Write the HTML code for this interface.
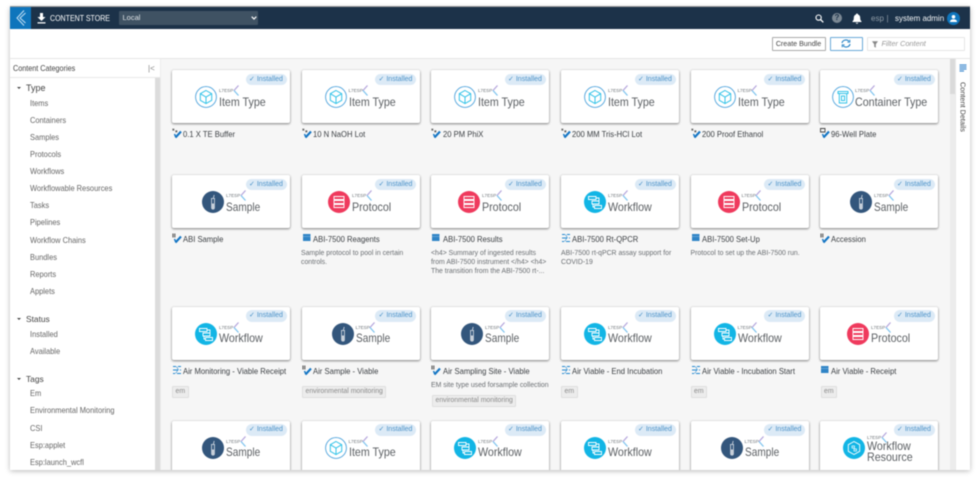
<!DOCTYPE html>
<html><head><meta charset="utf-8"><style>
*{box-sizing:border-box}
html,body{margin:0;padding:0;width:980px;height:482px;background:#fff;overflow:hidden;font-family:"Liberation Sans","DejaVu Sans",sans-serif}
.a{position:absolute;white-space:nowrap}
.x{transform-origin:0 50%}
#root{position:absolute;left:0;top:0;width:980px;height:482px;filter:blur(.5px)}
#win{position:absolute;left:10px;top:7px;width:960px;height:463px;box-shadow:0 1px 5px rgba(0,0,0,.28);background:#fff}
#hdr{left:10px;top:7px;width:960px;height:21.5px;background:#1c3249}
#tool{left:10px;top:29px;width:960px;height:30px;background:#fff;border-bottom:1px solid #e6e6e6}
#side{left:10px;top:59px;width:150px;height:411px;background:#fff;overflow:hidden}
.s{left:20px;font-size:8.4px;color:#666;line-height:10px;transform:scaleX(.89);transform-origin:0 50%}
.h{left:6px;font-size:9px;color:#444;line-height:10px;padding-left:10px}
.h:before{content:"";position:absolute;left:1px;top:4px;border:2.2px solid transparent;border-top:2.6px solid #444;border-bottom:0}
#main{left:160px;top:59px;width:790px;height:411px;background:#f6f6f6;overflow:hidden;border-left:1px solid #ececec}
.c{position:absolute;width:118px;height:53px;background:#fff;border-radius:2px;box-shadow:0 1px 2px rgba(0,0,0,.45),0 0 2px rgba(0,0,0,.12)}
.p{position:absolute;left:73.5px;top:3.6px;width:41px;height:11.5px;border-radius:6px;background:#dceaf6;color:#4d93c9;font-size:7px;line-height:11.5px;text-align:center;white-space:nowrap}
.c svg.i{position:absolute;width:22px;height:22px;top:16px}
.t{position:absolute;top:23.5px;font-size:12px;line-height:16px;color:#5b5f63;white-space:nowrap;transform:scaleX(.89);transform-origin:0 50%}
.t.sm{transform:scaleX(.84)}
.e{position:absolute;top:17px;font-size:4.6px;line-height:7px;color:#6d7378;white-space:nowrap}
.e svg{position:absolute;left:12.5px;top:-3px;width:8px;height:13px}
.n{position:absolute;font-size:8.6px;line-height:11px;color:#3b3f43;white-space:nowrap;transform:scaleX(.89);transform-origin:0 50%;margin-top:.4px}
.m{position:absolute;width:10px;height:11px}
.d{position:absolute;font-size:6.9px;line-height:9.2px;color:#6b6f73;white-space:nowrap}
.g{position:absolute;height:11.5px;background:#ececec;border:1px solid #dfdfdf;border-radius:1px;font-size:6.9px;line-height:10px;color:#8a8a8a;padding:0 2.5px;white-space:nowrap}
</style></head><body>
<svg width="0" height="0" style="position:absolute"><defs>
<symbol id="ic-item" viewBox="0 0 22 22"><circle cx="11" cy="11" r="10.4" fill="#fff" stroke="#4ea3dc" stroke-width=".9"/><path d="M11 4.5l5.7 3.2v6.6L11 17.5l-5.7-3.2V7.7zM5.3 7.7L11 11l5.700-3.300M11 11v6.500" fill="none" stroke="#33c3e8" stroke-width="1"/></symbol>
<symbol id="ic-cont" viewBox="0 0 22 22"><circle cx="11" cy="11" r="10.4" fill="#fff" stroke="#4ea3dc" stroke-width=".9"/><path d="M6 5.500h10v2H6zM7.300 7.500h7.400v9.500H7.300zM9.500 10h3v4.500h-3z" fill="none" stroke="#33c3e8" stroke-width="1"/></symbol>
<symbol id="ic-sample" viewBox="0 0 22 22"><circle cx="11" cy="11" r="11" fill="#33567c"/><path d="M9 7.500h4M9.600 7.500v9.300a1.400 1.400 0 0 0 2.800 0V7.500M11.300 7.500l.9-3.500" fill="none" stroke="#d8dee6" stroke-width=".8"/><path d="M9.800 12.500h2.400v4.300a1.200 1.200 0 0 1-2.400 0z" fill="#c5ced8"/></symbol>
<symbol id="ic-prot" viewBox="0 0 22 22"><circle cx="11" cy="11" r="11" fill="#ef3a5d"/><path d="M6 5.500h10v3H6zM6 9.500h10v3H6zM6 13.500h10v3H6z" fill="none" stroke="#fff" stroke-width=".9"/></symbol>
<symbol id="ic-wf" viewBox="0 0 22 22"><circle cx="11" cy="11" r="11" fill="#12b5e5"/><path d="M4.500 5.500h7.500v3H4.500zM8 10h7v3H8zM10.500 14.500h7v3h-7zM12 7h3v3M9 13v3h1.500" fill="none" stroke="#fff" stroke-width=".9"/></symbol>
<symbol id="ic-res" viewBox="0 0 22 22"><circle cx="11" cy="11" r="11" fill="#12b5e5"/><path d="M11 4.500l5.700 3.200v6.600L11 17.500l-5.700-3.200V7.700z" fill="none" stroke="#fff" stroke-width=".9"/><path d="M9 9h2.500v2H9zM11 12h2.500v2H11z" fill="none" stroke="#fff" stroke-width=".7"/></symbol>
<symbol id="chev" viewBox="0 0 8 13"><path d="M6.500 1.500L2 6.500" fill="none" stroke="#b5a6dc" stroke-width="1.300"/><path d="M2 6.500l4.500 5" fill="none" stroke="#7fc4ee" stroke-width="1.300"/></symbol>
<symbol id="m-item" viewBox="0 0 10 11"><path d="M.5 .8l1.700 1.700M2.200 .8L.5 2.500M3.500 2.500l1.700 1.700M5.200 2.500L3.500 4.200" stroke="#444" stroke-width=".8" fill="none"/><path d="M2.500 6l1.500 3.500" fill="none" stroke="#1576c4" stroke-width="1.500"/><path d="M3.500 9.500L9 3.500" fill="none" stroke="#1576c4" stroke-width="2.100"/></symbol>
<symbol id="m-cont" viewBox="0 0 10 11"><path d="M.5.500h4.500v3.500H.5z" stroke="#444" stroke-width=".9" fill="none"/><path d="M2.500 6l1.500 3.500" fill="none" stroke="#1576c4" stroke-width="1.500"/><path d="M3.500 9.500L9 3.500" fill="none" stroke="#1576c4" stroke-width="2.100"/></symbol>
<symbol id="m-samp" viewBox="0 0 10 11"><path d="M1 .5v4M2.800 .5v4" stroke="#555" stroke-width="1.100" fill="none"/><path d="M2.500 6l1.500 3.500" fill="none" stroke="#1576c4" stroke-width="1.500"/><path d="M3.500 9.500L9 3.500" fill="none" stroke="#1576c4" stroke-width="2.100"/></symbol>
<symbol id="m-prot" viewBox="0 0 10 11"><rect x="1" y="1" width="7.500" height="7" fill="#2f84c6"/><path d="M1 3.500h7.500" stroke="#8fc0e4" stroke-width=".5"/></symbol>
<symbol id="m-wf" viewBox="0 0 10 11"><path d="M1 1.500h3M6 1.500h3M1 5h5M8 5h1M1 8.500h2M5 8.500h4" stroke="#1f86cf" stroke-width="1.100" fill="none"/><path d="M4.500 1.500l2 3.500M3.500 8.500l2.500-3.500" stroke="#1f86cf" stroke-width=".6" fill="none"/></symbol>
</defs></svg>
<div id="root">
<div id="win"></div>
<div class="a" style="left:10px;top:6px;width:960px;height:1px;background:#9a9a9a"></div>
<div class="a" id="hdr"></div>
<div class="a" style="left:10px;top:7px;width:21px;height:21.5px;background:#0e75bc"></div>
<svg class="a" style="left:14px;top:9px" width="13" height="18" viewBox="0 0 13 18"><path d="M10 1.500L3 9l7 7.500M11.500 4L6 9l5.500 5" fill="none" stroke="#bcdcf2" stroke-width="1.100"/></svg>
<svg class="a" style="left:37px;top:13px" width="9" height="11" viewBox="0 0 9 11"><path d="M3 0h3v4h2.500L4.500 8 .5 4H3zM.5 9.200h8v1.300h-8z" fill="#fff"/></svg>
<div class="a x" style="left:50px;top:12.500px;font-size:8.200px;line-height:11px;color:#fff;transform:scaleX(.86)">CONTENT STORE</div>
<div class="a" style="left:118.500px;top:11px;width:139.500px;height:14px;background:#3f5263;border-radius:1px;color:#dfe3e6;font-size:7.500px;line-height:14px;padding-left:4px">Local</div>
<svg class="a" style="left:250.500px;top:16px" width="6" height="4" viewBox="0 0 6 4"><path d="M.7.700L3 3 5.300.700" fill="none" stroke="#fff" stroke-width="1.200"/></svg>
<svg class="a" style="left:814.500px;top:14px" width="9" height="9" viewBox="0 0 9 9"><circle cx="3.600" cy="3.600" r="2.600" fill="none" stroke="#fff" stroke-width="1.100"/><path d="M5.500 5.500L8.300 8.300" stroke="#fff" stroke-width="1.300"/></svg>
<div class="a" style="left:832px;top:13px;width:10px;height:10px;border-radius:50%;background:#7b8894;color:#1c3249;font-size:8px;font-weight:bold;line-height:10px;text-align:center">?</div>
<svg class="a" style="left:852px;top:13px" width="10" height="11" viewBox="0 0 10 11"><path d="M5 .5c.6 0 1 .4 1 1 1.500.5 2.200 1.700 2.200 3.200 0 2 .4 2.800 1.300 3.600v.7H.5v-.7c.9-.8 1.300-1.600 1.300-3.600C1.800 3.200 2.500 2 4 1.500c0-.6.4-1 1-1zM3.800 9.700h2.400C6.100 10.400 5.600 10.800 5 10.800s-1.100-.4-1.200-1.100z" fill="#fff"/></svg>
<div class="a" style="left:871px;top:12.500px;font-size:8px;line-height:11px;color:#8f9ba6">esp</div>
<div class="a" style="left:886.500px;top:12.500px;font-size:8px;line-height:11px;color:#8f9ba6">|</div>
<div class="a x" style="left:895px;top:12.500px;font-size:8.300px;line-height:11px;color:#f2f4f6;transform:scaleX(.96)">system admin</div>
<div class="a" style="left:946.500px;top:12px;width:13px;height:13px;border-radius:50%;background:#0e75bc"></div>
<svg class="a" style="left:948.500px;top:14px" width="9" height="9" viewBox="0 0 9 9"><circle cx="4.500" cy="2.800" r="1.800" fill="#fff"/><path d="M1 8c0-2 1.600-2.800 3.500-2.800S8 6 8 8z" fill="#fff"/></svg>

<div class="a" id="tool"></div>
<div class="a" style="left:771.500px;top:36.500px;width:54px;height:14.500px;border:1px solid #aaa;border-radius:1px;background:#fff;font-size:7.100px;line-height:12.500px;color:#444;text-align:center">Create Bundle</div>
<div class="a" style="left:830px;top:36.500px;width:32.500px;height:14.500px;border:1px solid #6aa9d8;border-radius:1px;background:#fff"></div>
<svg class="a" style="left:841px;top:39px" width="10" height="9" viewBox="0 0 10 9"><path d="M1 4a4 3.500 0 0 1 7-1.800M9 5a4 3.500 0 0 1-7 1.800" fill="none" stroke="#1f7fc4" stroke-width="1.100"/><path d="M8.800.8v2.400H6.400M1.200 8.200V5.800h2.400" fill="none" stroke="#1f7fc4" stroke-width=".9"/></svg>
<div class="a" style="left:867px;top:36.500px;width:98px;height:14.500px;border:1px solid #e6e6e6;border-radius:1px;background:#fff;font-size:7.400px;line-height:12.500px;color:#999;font-style:italic;padding-left:13.500px">Filter Content</div>
<svg class="a" style="left:871.500px;top:40.500px" width="6" height="7" viewBox="0 0 6 7"><path d="M0 .3h6L3.800 3.200V6.800L2.200 5.800V3.200z" fill="#888"/></svg>

<div class="a" id="side">
<div class="a x" style="left:3px;top:4px;font-size:8.300px;line-height:11px;color:#444;transform:scaleX(.87)">Content Categories</div>
<div class="a" style="left:0;top:18px;width:150px;height:1px;background:#e8e8e8"></div>
<div class="a" style="left:138px;top:4px;font-size:8px;line-height:11px;color:#888">|&lt;</div>
<div class="a" style="left:145px;top:19px;width:4.500px;height:392px;background:#dcdcdc"></div>
<div class="a h" style="top:24px">Type</div>
<div class="a s" style="top:39px">Items</div>
<div class="a s" style="top:56px">Containers</div>
<div class="a s" style="top:73px">Samples</div>
<div class="a s" style="top:90px">Protocols</div>
<div class="a s" style="top:107px">Workflows</div>
<div class="a s" style="top:124px">Workflowable Resources</div>
<div class="a s" style="top:141px">Tasks</div>
<div class="a s" style="top:158px">Pipelines</div>
<div class="a s" style="top:176px">Workflow Chains</div>
<div class="a s" style="top:193px">Bundles</div>
<div class="a s" style="top:210px">Reports</div>
<div class="a s" style="top:227px">Applets</div>
<div class="a h" style="top:255px;font-size:8.400px">Status</div>
<div class="a s" style="top:269.500px">Installed</div>
<div class="a s" style="top:287px">Available</div>
<div class="a h" style="top:315px;font-size:8.400px">Tags</div>
<div class="a s" style="top:329px">Em</div>
<div class="a s" style="top:346px">Environmental Monitoring</div>
<div class="a s" style="top:364px">CSI</div>
<div class="a s" style="top:381px">Esp:applet</div>
<div class="a s" style="top:398px">Esp:launch_wcfl</div>
</div>

<div class="a" id="main">
<!-- row 1 -->
<div class="c" style="left:11px;top:11px"><div class="p">✓ Installed</div><svg class="i" style="left:23px"><use href="#ic-item"/></svg><div class="e" style="left:47px">L7ESP<svg><use href="#chev"/></svg></div><div class="t" style="left:47px">Item Type</div></div>
<div class="c" style="left:140.500px;top:11px"><div class="p">✓ Installed</div><svg class="i" style="left:23px"><use href="#ic-item"/></svg><div class="e" style="left:47px">L7ESP<svg><use href="#chev"/></svg></div><div class="t" style="left:47px">Item Type</div></div>
<div class="c" style="left:270px;top:11px"><div class="p">✓ Installed</div><svg class="i" style="left:23px"><use href="#ic-item"/></svg><div class="e" style="left:47px">L7ESP<svg><use href="#chev"/></svg></div><div class="t" style="left:47px">Item Type</div></div>
<div class="c" style="left:400px;top:11px"><div class="p">✓ Installed</div><svg class="i" style="left:23px"><use href="#ic-item"/></svg><div class="e" style="left:47px">L7ESP<svg><use href="#chev"/></svg></div><div class="t" style="left:47px">Item Type</div></div>
<div class="c" style="left:529.500px;top:11px"><div class="p">✓ Installed</div><svg class="i" style="left:23px"><use href="#ic-item"/></svg><div class="e" style="left:47px">L7ESP<svg><use href="#chev"/></svg></div><div class="t" style="left:47px">Item Type</div></div>
<div class="c" style="left:659px;top:11px"><div class="p">✓ Installed</div><svg class="i" style="left:12px"><use href="#ic-cont"/></svg><div class="e" style="left:35px">L7ESP<svg><use href="#chev"/></svg></div><div class="t" style="left:35px">Container Type</div></div>
<svg class="m" style="left:11px;top:69px"><use href="#m-item"/></svg><div class="n" style="left:22px;top:69.500px">0.1 X TE Buffer</div>
<svg class="m" style="left:140.500px;top:69px"><use href="#m-item"/></svg><div class="n" style="left:152px;top:69.500px">10 N NaOH Lot</div>
<svg class="m" style="left:270px;top:69px"><use href="#m-item"/></svg><div class="n" style="left:281.500px;top:69.500px">20 PM PhiX</div>
<svg class="m" style="left:400px;top:69px"><use href="#m-item"/></svg><div class="n" style="left:411px;top:69.500px">200 MM Tris-HCl Lot</div>
<svg class="m" style="left:529.500px;top:69px"><use href="#m-item"/></svg><div class="n" style="left:541px;top:69.500px">200 Proof Ethanol</div>
<svg class="m" style="left:659px;top:69px"><use href="#m-cont"/></svg><div class="n" style="left:670px;top:69.500px">96-Well Plate</div>
<!-- row 2 -->
<div class="c" style="left:11px;top:116px"><div class="p">✓ Installed</div><svg class="i" style="left:30px"><use href="#ic-sample"/></svg><div class="e" style="left:54px">L7ESP<svg><use href="#chev"/></svg></div><div class="t sm" style="left:54px">Sample</div></div>
<div class="c" style="left:140.500px;top:116px"><div class="p">✓ Installed</div><svg class="i" style="left:26.500px"><use href="#ic-prot"/></svg><div class="e" style="left:50.500px">L7ESP<svg><use href="#chev"/></svg></div><div class="t" style="left:50.500px">Protocol</div></div>
<div class="c" style="left:270px;top:116px"><div class="p">✓ Installed</div><svg class="i" style="left:27px"><use href="#ic-prot"/></svg><div class="e" style="left:51px">L7ESP<svg><use href="#chev"/></svg></div><div class="t" style="left:51px">Protocol</div></div>
<div class="c" style="left:400px;top:116px"><div class="p">✓ Installed</div><svg class="i" style="left:23px"><use href="#ic-wf"/></svg><div class="e" style="left:47px">L7ESP<svg><use href="#chev"/></svg></div><div class="t" style="left:47px">Workflow</div></div>
<div class="c" style="left:529.500px;top:116px"><div class="p">✓ Installed</div><svg class="i" style="left:27px"><use href="#ic-prot"/></svg><div class="e" style="left:51px">L7ESP<svg><use href="#chev"/></svg></div><div class="t" style="left:51px">Protocol</div></div>
<div class="c" style="left:659px;top:116px"><div class="p">✓ Installed</div><svg class="i" style="left:30px"><use href="#ic-sample"/></svg><div class="e" style="left:54px">L7ESP<svg><use href="#chev"/></svg></div><div class="t sm" style="left:54px">Sample</div></div>
<svg class="m" style="left:11px;top:174px"><use href="#m-samp"/></svg><div class="n" style="left:22px;top:174.500px">ABI Sample</div>
<svg class="m" style="left:140.500px;top:174px"><use href="#m-prot"/></svg><div class="n" style="left:152px;top:174.500px">ABI-7500 Reagents</div>
<svg class="m" style="left:270px;top:174px"><use href="#m-prot"/></svg><div class="n" style="left:281.500px;top:174.500px">ABI-7500 Results</div>
<svg class="m" style="left:400px;top:174px"><use href="#m-wf"/></svg><div class="n" style="left:411px;top:174.500px">ABI-7500 Rt-QPCR</div>
<svg class="m" style="left:529.500px;top:174px"><use href="#m-prot"/></svg><div class="n" style="left:541px;top:174.500px">ABI-7500 Set-Up</div>
<svg class="m" style="left:659px;top:174px"><use href="#m-samp"/></svg><div class="n" style="left:670px;top:174.500px">Accession</div>
<div class="d" style="left:140px;top:190px">Sample protocol to pool in certain<br>controls.</div>
<div class="d" style="left:270px;top:190px">&lt;h4&gt; Summary of ingested results<br>from ABI-7500 instrument &lt;/h4&gt; &lt;h4&gt;<br>The transition from the ABI-7500 rt-...</div>
<div class="d" style="left:400px;top:190px">ABI-7500 rt-qPCR assay support for<br>COVID-19</div>
<div class="d" style="left:529.500px;top:190px">Protocol to set up the ABI-7500 run.</div>
<!-- row 3 -->
<div class="c" style="left:11px;top:247.500px"><div class="p">✓ Installed</div><svg class="i" style="left:23px"><use href="#ic-wf"/></svg><div class="e" style="left:47px">L7ESP<svg><use href="#chev"/></svg></div><div class="t" style="left:47px">Workflow</div></div>
<div class="c" style="left:140.500px;top:247.500px"><div class="p">✓ Installed</div><svg class="i" style="left:30px"><use href="#ic-sample"/></svg><div class="e" style="left:54px">L7ESP<svg><use href="#chev"/></svg></div><div class="t sm" style="left:54px">Sample</div></div>
<div class="c" style="left:270px;top:247.500px"><div class="p">✓ Installed</div><svg class="i" style="left:30px"><use href="#ic-sample"/></svg><div class="e" style="left:54px">L7ESP<svg><use href="#chev"/></svg></div><div class="t sm" style="left:54px">Sample</div></div>
<div class="c" style="left:400px;top:247.500px"><div class="p">✓ Installed</div><svg class="i" style="left:23px"><use href="#ic-wf"/></svg><div class="e" style="left:47px">L7ESP<svg><use href="#chev"/></svg></div><div class="t" style="left:47px">Workflow</div></div>
<div class="c" style="left:529.500px;top:247.500px"><div class="p">✓ Installed</div><svg class="i" style="left:23px"><use href="#ic-wf"/></svg><div class="e" style="left:47px">L7ESP<svg><use href="#chev"/></svg></div><div class="t" style="left:47px">Workflow</div></div>
<div class="c" style="left:659px;top:247.500px"><div class="p">✓ Installed</div><svg class="i" style="left:27px"><use href="#ic-prot"/></svg><div class="e" style="left:51px">L7ESP<svg><use href="#chev"/></svg></div><div class="t" style="left:51px">Protocol</div></div>
<svg class="m" style="left:11px;top:306px"><use href="#m-wf"/></svg><div class="n" style="left:22px;top:306.500px">Air Monitoring - Viable Receipt</div>
<svg class="m" style="left:140.500px;top:306px"><use href="#m-samp"/></svg><div class="n" style="left:152px;top:306.500px">Air Sample - Viable</div>
<svg class="m" style="left:270px;top:306px"><use href="#m-samp"/></svg><div class="n" style="left:281.500px;top:306.500px">Air Sampling Site - Viable</div>
<svg class="m" style="left:400px;top:306px"><use href="#m-wf"/></svg><div class="n" style="left:411px;top:306.500px">Air Viable - End Incubation</div>
<svg class="m" style="left:529.500px;top:306px"><use href="#m-wf"/></svg><div class="n" style="left:541px;top:306.500px">Air Viable - Incubation Start</div>
<svg class="m" style="left:659px;top:306px"><use href="#m-prot"/></svg><div class="n" style="left:670px;top:306.500px">Air Viable - Receipt</div>
<div class="d" style="left:270px;top:322px">EM site type used forsample collection</div>
<div class="g" style="left:11px;top:327px">em</div>
<div class="g" style="left:141px;top:327px">environmental monitoring</div>
<div class="g" style="left:271px;top:336px">environmental monitoring</div>
<div class="g" style="left:400px;top:327px">em</div>
<div class="g" style="left:529.500px;top:327px">em</div>
<div class="g" style="left:659.500px;top:327px">em</div>
<!-- row 4 -->
<div class="c" style="left:11px;top:361.500px"><div class="p">✓ Installed</div><svg class="i" style="left:30px"><use href="#ic-sample"/></svg><div class="e" style="left:54px">L7ESP<svg><use href="#chev"/></svg></div><div class="t sm" style="left:54px">Sample</div></div>
<div class="c" style="left:140.500px;top:361.500px"><div class="p">✓ Installed</div><svg class="i" style="left:23px"><use href="#ic-item"/></svg><div class="e" style="left:47px">L7ESP<svg><use href="#chev"/></svg></div><div class="t" style="left:47px">Item Type</div></div>
<div class="c" style="left:270px;top:361.500px"><div class="p">✓ Installed</div><svg class="i" style="left:23px"><use href="#ic-wf"/></svg><div class="e" style="left:47px">L7ESP<svg><use href="#chev"/></svg></div><div class="t" style="left:47px">Workflow</div></div>
<div class="c" style="left:400px;top:361.500px"><div class="p">✓ Installed</div><svg class="i" style="left:23px"><use href="#ic-wf"/></svg><div class="e" style="left:47px">L7ESP<svg><use href="#chev"/></svg></div><div class="t" style="left:47px">Workflow</div></div>
<div class="c" style="left:529.500px;top:361.500px"><div class="p">✓ Installed</div><svg class="i" style="left:30px"><use href="#ic-sample"/></svg><div class="e" style="left:54px">L7ESP<svg><use href="#chev"/></svg></div><div class="t sm" style="left:54px">Sample</div></div>
<div class="c" style="left:659px;top:361.500px"><div class="p">✓ Installed</div><svg class="i" style="left:23px;top:16px"><use href="#ic-res"/></svg><div class="e" style="left:47px;top:13px">L7ESP<svg><use href="#chev"/></svg></div><div class="t" style="left:47px;top:20px;line-height:11.500px">Workflow<br>Resource</div></div>
</div>

<div class="a" style="left:950px;top:59px;width:5px;height:411px;background:#ececec"></div>
<div class="a" style="left:950px;top:59px;width:4.500px;height:35px;background:#dadada"></div>
<div class="a" style="left:955px;top:59px;width:15px;height:411px;background:#fff;border-left:1px solid #e8e8e8"></div>
<svg class="a" style="left:958.500px;top:64px" width="8" height="8" viewBox="0 0 8 8"><path d="M.5 1h7M.5 3h7M.5 5h7M.5 7h4.500" stroke="#4a90d0" stroke-width="1.200"/></svg>
<div class="a" style="left:957.500px;top:82px;writing-mode:vertical-rl;font-size:7.300px;line-height:10px;color:#444">Content Details</div>
</div>
</body></html>
